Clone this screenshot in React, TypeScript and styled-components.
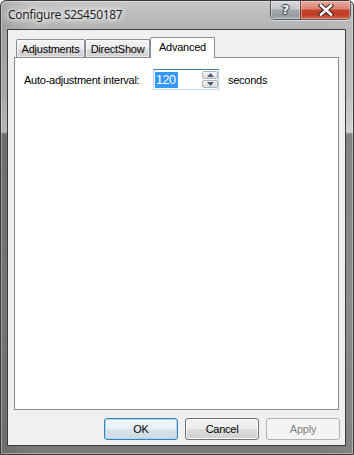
import React from 'react';
import styled, { createGlobalStyle, css } from 'styled-components';

const Global = createGlobalStyle`
  html, body { margin: 0; padding: 0; background: #ffffff; }
  body { width: 354px; height: 455px; overflow: hidden; }
  * { box-sizing: border-box; }
`;

const Window = styled.div`
  width: 354px;
  height: 455px;
  border: 1px solid #3a3a3a;
  border-radius: 6px 6px 0 0;
  background:
    linear-gradient(90deg, rgba(0, 0, 0, 0.12) 0px, rgba(0, 0, 0, 0) 30px, rgba(0, 0, 0, 0) 320px, rgba(255, 255, 255, 0.08) 354px),
    linear-gradient(180deg, #c6c6c6 0px, #b4b4b4 26px, #bababa 90px, #cdcdcd 131px, #7b7b7b 133px, #838383 300px, #7a7a7a 100%);
  box-shadow: inset 0 0 0 1px rgba(255, 255, 255, 0.35);
  display: flex;
  flex-direction: column;
  padding: 0 7px 8px 6px;
  font-family: 'Liberation Sans', Arial, sans-serif;
  font-size: 11px;
  letter-spacing: -0.25px;
  color: #000;
  overflow: hidden;
`;

const TitleBar = styled.div`
  height: 28px;
  display: flex;
  align-items: flex-start;
  flex-shrink: 0;
`;

const Title = styled.div`
  padding-left: 1px;
  line-height: 28px;
  font-family: 'Noto Sans', 'Open Sans', sans-serif;
  font-size: 12px;
  letter-spacing: -0.3px;
  color: #1e1e1e;
  text-shadow: 0 0 6px #ffffff, 0 0 10px #f2f2f2, 0 0 3px rgba(255, 255, 255, 0.9);
`;

const CaptionGroup = styled.div`
  margin-left: auto;
  margin-right: -5px;
  display: flex;
  height: 19px;
  border: 1px solid #555a60;
  border-top: none;
  border-radius: 0 0 5px 5px;
  overflow: hidden;
  box-shadow: 0 1px 0 rgba(255, 255, 255, 0.5);
`;

const CaptionButton = styled.div<{ $w: number; $close?: boolean }>`
  width: ${(p) => p.$w}px;
  height: 100%;
  display: flex;
  align-items: center;
  justify-content: center;
  box-shadow: inset 0 0 0 1px rgba(255, 255, 255, 0.35);
  ${(p) =>
    p.$close
      ? css`
          background: linear-gradient(180deg, #e9a99b 0%, #d98272 45%, #c4412a 50%, #c23c25 75%, #d5664c 100%);
          border-left: 1px solid #6a3a33;
        `
      : css`
          background: linear-gradient(180deg, #d7d9dc 0%, #c2c5c9 45%, #a3a8ad 50%, #989ca1 80%, #aab0b5 100%);
        `}
`;

const HelpGlyph = styled.span`
  font-family: 'DejaVu Sans', sans-serif;
  font-weight: bold;
  font-size: 13px;
  line-height: 1;
  letter-spacing: 0;
  color: #f4f4f4;
  margin-top: -1px;
  text-shadow: -1px 0 #3f4650, 1px 0 #3f4650, 0 -1px #3f4650, 0 1px #3f4650, 0 0 2px #2a3038;
`;

const Client = styled.div`
  flex: 1;
  border: 1px solid #3c3c3c;
  background: #f0f0f0;
  display: flex;
  flex-direction: column;
  padding: 7px 6px 5px 6px;
  min-height: 0;
`;

const TabStrip = styled.div`
  display: flex;
  align-items: flex-end;
  height: 20px;
  padding-left: 2px;
  position: relative;
  z-index: 1;
  flex-shrink: 0;
`;

const Tab = styled.div<{ $w: number; $active?: boolean }>`
  width: ${(p) => p.$w}px;
  display: flex;
  align-items: center;
  justify-content: center;
  border: 1px solid #898c95;
  border-bottom: none;
  border-radius: 2px 2px 0 0;
  white-space: nowrap;
  ${(p) =>
    p.$active
      ? css`
          height: 21px;
          margin-bottom: -1px;
          background: #ffffff;
          padding-bottom: 2px;
        `
      : css`
          height: 18px;
          background: linear-gradient(180deg, #f3f3f3 0%, #ebebeb 50%, #dddddd 50%, #cfcfcf 100%);
          box-shadow: inset 0 0 0 1px rgba(255, 255, 255, 0.6);
        `}
`;

const Panel = styled.div`
  flex: 1;
  background: #ffffff;
  border: 1px solid #898c95;
  padding: 11px 9px;
  min-height: 0;
`;

const FieldRow = styled.div`
  display: flex;
  align-items: center;
  height: 21px;
`;

const FieldLabel = styled.div`
  width: 129px;
`;

const SpinBox = styled.div`
  width: 66px;
  height: 21px;
  display: flex;
  align-items: center;
  border: 1px solid #b5cfe7;
  border-top-color: #3d7bad;
  border-bottom-color: #c5dcee;
  background: #ffffff;
  padding: 1px 0 1px 1px;
`;

const SpinValue = styled.div`
  flex: 1;
  height: 100%;
  display: flex;
  align-items: center;
`;

const Selected = styled.span`
  background: #3399ff;
  color: #ffffff;
  height: 16px;
  line-height: 16px;
  padding: 0 2px 0 1px;
  font-size: 12.5px;
  letter-spacing: -0.4px;
`;

const SpinButtons = styled.div`
  width: 16px;
  height: 17px;
  display: flex;
  flex-direction: column;
  gap: 1px;
`;

const SpinArrowButton = styled.div`
  flex: 1;
  display: flex;
  align-items: center;
  justify-content: center;
  border: 1px solid #b4b4b4;
  border-radius: 2px;
  background: linear-gradient(180deg, #f6f6f6 0%, #e8e8e8 50%, #dcdcdc 100%);
`;

const Unit = styled.div`
  margin-left: 9px;
`;

const ButtonRow = styled.div`
  display: flex;
  justify-content: flex-end;
  gap: 7px;
  margin-top: 8px;
  margin-right: -1px;
  flex-shrink: 0;
`;

const DialogButton = styled.div<{ $variant?: 'default' | 'disabled' }>`
  width: 74px;
  height: 22px;
  display: flex;
  align-items: center;
  justify-content: center;
  border-radius: 3px;
  border: 1px solid #707070;
  background: linear-gradient(180deg, #f2f2f2 0%, #ebebeb 50%, #dddddd 50%, #cfcfcf 100%);
  box-shadow: inset 0 0 0 1px #fbfbfb;
  ${(p) =>
    p.$variant === 'default' &&
    css`
      border-color: #3c7fb1;
      box-shadow: inset 0 0 0 1px #a9d9f2;
      background: linear-gradient(180deg, #f0f6fa 0%, #e8f1f7 50%, #d9e6ee 50%, #cdd9e2 100%);
    `}
  ${(p) =>
    p.$variant === 'disabled' &&
    css`
      border-color: #adb2b5;
      background: #f4f4f4;
      box-shadow: none;
      color: #838383;
    `}
`;

const Arrow = ({ up }: { up?: boolean }) => (
  <svg width="7" height="4" viewBox="0 0 7 4">
    {up ? <polygon points="0,4 7,4 3.5,0" fill="#4b5d84" /> : <polygon points="0,0 7,0 3.5,4" fill="#4b5d84" />}
  </svg>
);

const CloseIcon = () => (
  <svg width="16" height="12" viewBox="0 0 16 12">
    <path d="M3 1.5 L13 10.5 M13 1.5 L3 10.5" stroke="#3b2320" strokeWidth="4.6" strokeLinecap="square" />
    <path d="M3 1.5 L13 10.5 M13 1.5 L3 10.5" stroke="#ffffff" strokeWidth="2.6" strokeLinecap="square" />
  </svg>
);

export default function App() {
  return (
    <>
      <Global />
      <Window>
        <TitleBar>
          <Title>Configure S2S450187</Title>
          <CaptionGroup>
            <CaptionButton $w={29}>
              <HelpGlyph>?</HelpGlyph>
            </CaptionButton>
            <CaptionButton $w={50} $close>
              <CloseIcon />
            </CaptionButton>
          </CaptionGroup>
        </TitleBar>
        <Client>
          <TabStrip>
            <Tab $w={69}>Adjustments</Tab>
            <Tab $w={65}>DirectShow</Tab>
            <Tab $w={65} $active>
              Advanced
            </Tab>
          </TabStrip>
          <Panel>
            <FieldRow>
              <FieldLabel>Auto-adjustment interval:</FieldLabel>
              <SpinBox>
                <SpinValue>
                  <Selected>120</Selected>
                </SpinValue>
                <SpinButtons>
                  <SpinArrowButton>
                    <Arrow up />
                  </SpinArrowButton>
                  <SpinArrowButton>
                    <Arrow />
                  </SpinArrowButton>
                </SpinButtons>
              </SpinBox>
              <Unit>seconds</Unit>
            </FieldRow>
          </Panel>
          <ButtonRow>
            <DialogButton $variant="default">OK</DialogButton>
            <DialogButton>Cancel</DialogButton>
            <DialogButton $variant="disabled">Apply</DialogButton>
          </ButtonRow>
        </Client>
      </Window>
    </>
  );
}
